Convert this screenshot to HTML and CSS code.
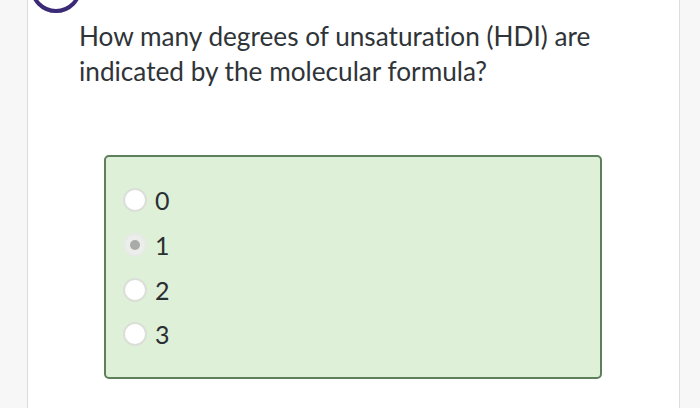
FILE: index.html
```html
<!DOCTYPE html>
<html>
<head>
<meta charset="utf-8">
<link rel="stylesheet" href="styles.css">
</head>
<body>
<div class="page">
  <div class="gutter left"></div>
  <main class="main">
    <div class="badge"></div>
    <p class="question">How many degrees of unsaturation (HDI) are indicated by the molecular formula?</p>
    <div class="answers">
      <label class="option"><span class="radio"></span><span class="label">0</span></label>
      <label class="option"><span class="radio selected"></span><span class="label">1</span></label>
      <label class="option"><span class="radio"></span><span class="label">2</span></label>
      <label class="option"><span class="radio"></span><span class="label">3</span></label>
    </div>
  </main>
  <div class="gutter right"></div>
</div>
</body>
</html>
```
FILE: styles.css
```css
html, body {
  margin: 0;
  padding: 0;
  height: 100%;
  background: #ffffff;
}
.page {
  display: flex;
  height: 408px;
  width: 700px;
  overflow: hidden;
  font-family: Lato, "Open Sans", sans-serif;
  font-variant-ligatures: none;
  color: #2f3438;
}
.gutter {
  background: #f7f7f7;
}
.gutter.left {
  width: 27px;
  border-right: 1px solid #dcdcdc;
}
.gutter.right {
  width: 20px;
  border-left: 1px solid #dcdcdc;
}
.main {
  flex: 1;
  position: relative;
  padding: 19px 0 0 51px;
}
.badge {
  position: absolute;
  left: 2px;
  top: -39px;
  width: 44px;
  height: 44px;
  border: 4px solid #3b2a78;
  border-radius: 50%;
}
.question {
  margin: 0;
  font-size: 26.2px;
  line-height: 35px;
  width: 560px;
}
.answers {
  margin: 66px 0 0 25px;
  width: 498px;
  height: 224px;
  box-sizing: border-box;
  background: #dff0d8;
  border: 2px solid #5d7f5c;
  border-radius: 5px;
  display: flex;
  flex-direction: column;
  padding-top: 21px;
}
.option {
  display: flex;
  align-items: center;
  height: 44.7px;
  padding-left: 17px;
}
.radio {
  width: 24px;
  height: 24px;
  border-radius: 50%;
  background: #ffffff;
  border: 2px solid #dadfd7;
  box-sizing: border-box;
  display: flex;
  align-items: center;
  justify-content: center;
}
.radio.selected {
  background: #eceeeb;
  border-color: #e6eae4;
}
.radio.selected::after {
  content: "";
  width: 10px;
  height: 10px;
  border-radius: 50%;
  background: #a9aba8;
}
.label {
  font-size: 25px;
  margin-left: 8px;
  color: #2a2f33;
}
```
